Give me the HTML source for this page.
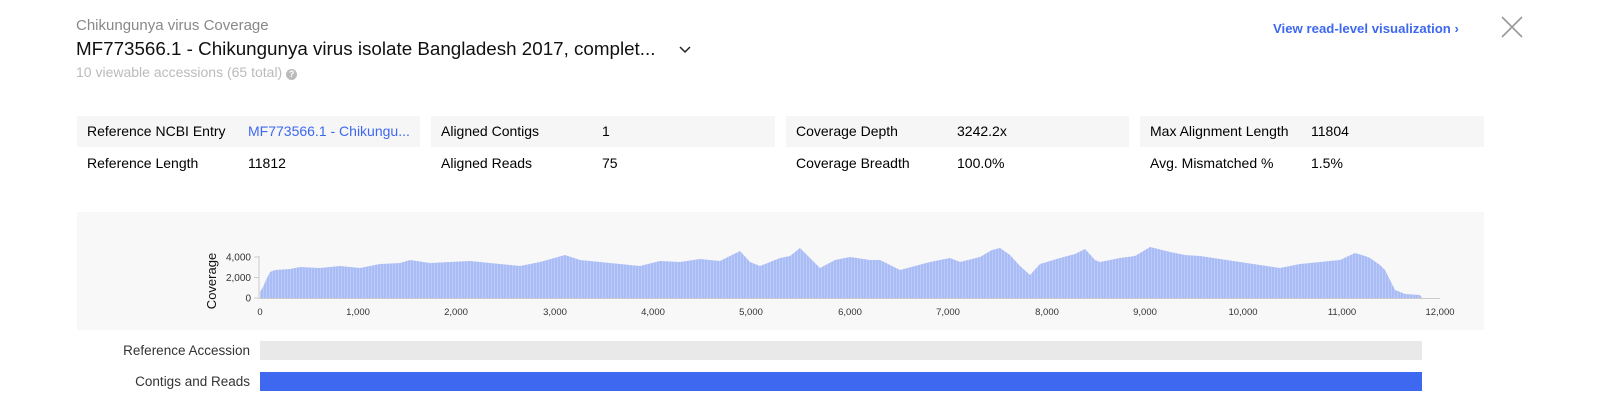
<!DOCTYPE html>
<html><head><meta charset="utf-8"><style>
*{margin:0;padding:0;box-sizing:border-box}
body{width:1600px;height:413px;background:#fff;font-family:"Liberation Sans","DejaVu Sans",sans-serif;position:relative;overflow:hidden;color:#000}
.a{position:absolute;white-space:nowrap}
.cell{position:absolute;height:31px;font-size:14px;line-height:31px}
.g{background:#f6f6f6}
</style></head><body>
<div class="a" style="left:76px;top:17px;font-size:15px;color:#888">Chikungunya virus Coverage</div>
<div class="a" style="left:76px;top:38px;font-size:18.8px;color:#111">MF773566.1 - Chikungunya virus isolate Bangladesh 2017, complet...</div>
<svg class="a" style="left:679px;top:45px" width="12" height="9"><path d="M1 2 L6 7 L11 2" stroke="#222" stroke-width="1.5" fill="none"/></svg>
<div class="a" style="left:76px;top:64px;font-size:14px;color:#bbb">10 viewable accessions (65 total) <span style="display:inline-block;width:11px;height:11px;border-radius:50%;background:#bbb;color:#fff;font-size:9px;line-height:11px;text-align:center;font-weight:bold">?</span></div>
<div class="a" style="left:1273px;top:21px;font-size:13.2px;color:#3e68f0;font-weight:bold">View read-level visualization ›</div>
<svg class="a" style="left:1501px;top:16px" width="22" height="22"><path d="M1 1L21 21M21 1L1 21" stroke="#999" stroke-width="1.6"/></svg>

<div class="cell g" style="left:77px;top:116px;width:343px"></div>
<div class="cell g" style="left:431px;top:116px;width:344px"></div>
<div class="cell g" style="left:786px;top:116px;width:343px"></div>
<div class="cell g" style="left:1140px;top:116px;width:344px"></div>
<div class="cell" style="left:87px;top:116px">Reference NCBI Entry</div>
<div class="cell" style="left:248px;top:116px;color:#3e68f0">MF773566.1 - Chikungu...</div>
<div class="cell" style="left:87px;top:148px">Reference Length</div>
<div class="cell" style="left:248px;top:148px">11812</div>
<div class="cell" style="left:441px;top:116px">Aligned Contigs</div>
<div class="cell" style="left:602px;top:116px">1</div>
<div class="cell" style="left:441px;top:148px">Aligned Reads</div>
<div class="cell" style="left:602px;top:148px">75</div>
<div class="cell" style="left:796px;top:116px">Coverage Depth</div>
<div class="cell" style="left:957px;top:116px">3242.2x</div>
<div class="cell" style="left:796px;top:148px">Coverage Breadth</div>
<div class="cell" style="left:957px;top:148px">100.0%</div>
<div class="cell" style="left:1150px;top:116px">Max Alignment Length</div>
<div class="cell" style="left:1311px;top:116px">11804</div>
<div class="cell" style="left:1150px;top:148px">Avg. Mismatched %</div>
<div class="cell" style="left:1311px;top:148px">1.5%</div>

<div class="a" style="left:77px;top:212px;width:1407px;height:118px;background:#f8f8f8"></div>
<svg class="a" style="left:0;top:0" width="1600" height="413" font-family="Liberation Sans,sans-serif" font-size="9.5" fill="#333">
<defs><pattern id="p" width="3" height="10" patternUnits="userSpaceOnUse"><rect x="2.4" width="0.6" height="10" fill="#fff" fill-opacity="0.35"/></pattern></defs>
<path fill="#aabcf5" d="M260 298 L260 292 L263 287 L266 280 L270 272 L275 270 L290 269 L300 267 L320 268 L340 266 L360 268 L380 264 L400 263 L410 260 L430 263 L450 262 L470 261 L500 264 L520 266 L540 262 L565 255 L580 260 L600 262 L620 264 L640 266 L660 261 L680 262 L700 259 L720 261 L730 256 L740 251 L750 262 L760 266 L780 258 L790 256 L800 248 L810 258 L820 268 L835 260 L850 257 L870 260 L880 260 L900 270 L915 266 L930 262 L950 258 L960 262 L980 257 L992 250 L1000 248 L1010 255 L1020 266 L1030 275 L1040 264 L1060 258 L1075 254 L1085 249 L1095 260 L1100 262 L1120 258 L1135 256 L1150 247 L1170 252 L1185 255 L1200 256 L1220 259 L1240 262 L1260 265 L1280 268 L1300 264 L1320 262 L1340 260 L1355 253 L1365 256 L1370 258 L1380 265 L1385 270 L1390 280 L1395 290 L1405 294 L1420 295 L1422 298 Z"/>
<path fill="url(#p)" d="M260 298 L260 292 L263 287 L266 280 L270 272 L275 270 L290 269 L300 267 L320 268 L340 266 L360 268 L380 264 L400 263 L410 260 L430 263 L450 262 L470 261 L500 264 L520 266 L540 262 L565 255 L580 260 L600 262 L620 264 L640 266 L660 261 L680 262 L700 259 L720 261 L730 256 L740 251 L750 262 L760 266 L780 258 L790 256 L800 248 L810 258 L820 268 L835 260 L850 257 L870 260 L880 260 L900 270 L915 266 L930 262 L950 258 L960 262 L980 257 L992 250 L1000 248 L1010 255 L1020 266 L1030 275 L1040 264 L1060 258 L1075 254 L1085 249 L1095 260 L1100 262 L1120 258 L1135 256 L1150 247 L1170 252 L1185 255 L1200 256 L1220 259 L1240 262 L1260 265 L1280 268 L1300 264 L1320 262 L1340 260 L1355 253 L1365 256 L1370 258 L1380 265 L1385 270 L1390 280 L1395 290 L1405 294 L1420 295 L1422 298 Z"/>
<line x1="259" y1="298.5" x2="1440" y2="298.5" stroke="#ccc"/>
<line x1="259" y1="256" x2="259" y2="298" stroke="#ccc"/>
<g stroke="#ccc"><line x1="254" y1="257" x2="259" y2="257"/><line x1="254" y1="277.5" x2="259" y2="277.5"/><line x1="254" y1="298" x2="259" y2="298"/></g>
<g text-anchor="end" font-size="10"><text x="251" y="260.5">4,000</text><text x="251" y="281">2,000</text><text x="251" y="301.5">0</text></g>
<text transform="translate(216,281) rotate(-90)" text-anchor="middle" font-size="13" fill="#111">Coverage</text>
<g text-anchor="middle"><text x="260" y="315">0</text><text x="358" y="315">1,000</text><text x="456" y="315">2,000</text><text x="555" y="315">3,000</text><text x="653" y="315">4,000</text><text x="751" y="315">5,000</text><text x="850" y="315">6,000</text><text x="948" y="315">7,000</text><text x="1047" y="315">8,000</text><text x="1145" y="315">9,000</text><text x="1243" y="315">10,000</text><text x="1342" y="315">11,000</text><text x="1440" y="315">12,000</text></g>
</svg>
<div class="a" style="right:1350px;top:343px;font-size:13.5px;color:#333">Reference Accession</div>
<div class="a" style="left:260px;top:341px;width:1162px;height:19px;background:#e9e9e9"></div>
<div class="a" style="right:1350px;top:374px;font-size:13.5px;color:#333">Contigs and Reads</div>
<div class="a" style="left:260px;top:372px;width:1162px;height:19px;background:#3e68f0"></div>
</body></html>
